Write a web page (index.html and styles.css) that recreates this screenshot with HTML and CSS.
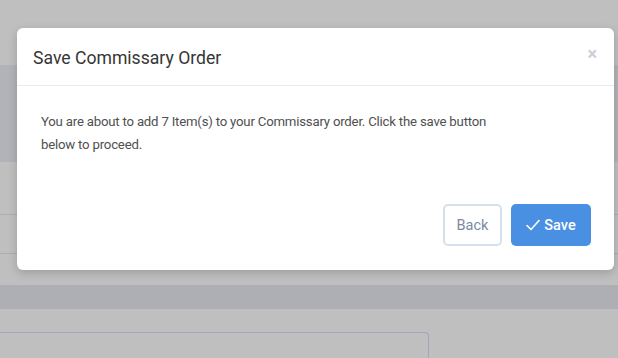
FILE: index.html
```html
<!DOCTYPE html>
<html>
<head>
<meta charset="utf-8">
<link rel="stylesheet" href="styles.css">
</head>
<body>
<div class="page">
  <div class="top"></div>
  <div class="band"></div>
  <div class="gap1"></div>
  <div class="row-line"></div>
  <div class="gap2"></div>
  <div class="band2"></div>
  <div class="gap3"></div>
  <div class="input-box"></div>
</div>
<div class="modal">
  <div class="modal-header">
    <h4 class="modal-title">Save Commissary Order</h4>
    <span class="close">&times;</span>
  </div>
  <div class="modal-body">
    <p>You are about to add 7 Item(s) to your Commissary order. Click the save button below to proceed.</p>
  </div>
  <div class="modal-footer">
    <button class="btn btn-back">Back</button>
    <button class="btn btn-save"><svg class="check" width="14" height="12" viewBox="0 0 14 12"><path d="M1 6.5 L5 10.5 L13 1.5" fill="none" stroke="#fff" stroke-width="1.6" stroke-linecap="round" stroke-linejoin="round"/></svg>Save</button>
  </div>
</div>
</body>
</html>
```

FILE: styles.css
```css
html, body {
  margin: 0;
  padding: 0;
  width: 618px;
  height: 358px;
  overflow: hidden;
  background: #bfbfbf;
  font-family: Roboto, Lato, sans-serif;
}
.page {
  display: flex;
  flex-direction: column;
}
.top { height: 65px; }
.band { height: 97px; background: #b2b3b8; }
.gap1 { height: 52px; border-bottom: 1px solid #a9aeb7; }
.row-line { height: 38px; border-bottom: 1px solid #a9aeb7; }
.gap2 { height: 31px; }
.band2 { height: 24px; background: #adafb5; }
.gap3 { height: 23px; }
.input-box {
  width: 428px;
  height: 40px;
  border-top: 1px solid #a0a9b8;
  border-right: 1px solid #a0a9b8;
  border-top-right-radius: 4px;
}
.modal {
  position: absolute;
  left: 17px;
  top: 28px;
  width: 597px;
  height: 242px;
  background: #fff;
  border-radius: 6px;
  box-shadow: 0 3px 10px rgba(0,0,0,0.18);
  display: flex;
  flex-direction: column;
}
.modal-header {
  height: 58px;
  box-sizing: border-box;
  border-bottom: 1px solid #e4ebf1;
  display: flex;
  align-items: center;
  justify-content: space-between;
  padding: 0 17px 0 16px;
}
.modal-title {
  margin: 0;
  font-size: 17.6px;
  font-weight: 400;
  color: #363636;
  padding-top: 2px;
}
.close {
  font-size: 18px;
  font-weight: 700;
  color: #cbcfd6;
  line-height: 1;
  margin-top: -6px;
}
.modal-body {
  padding: 24px 24px 0 24px;
}
.modal-body p {
  margin: 0;
  max-width: 460px;
  font-size: 13.2px;
  letter-spacing: -0.2px;
  line-height: 23px;
  color: #505050;
}
.modal-footer {
  margin-top: auto;
  display: flex;
  justify-content: flex-end;
  gap: 9px;
  padding: 0 23px 24px 0;
}
.btn {
  height: 42px;
  border-radius: 5px;
  font-family: inherit;
  font-size: 14.5px;
  box-sizing: border-box;
  display: flex;
  align-items: center;
  justify-content: center;
  padding: 0;
}
.btn-back {
  width: 59px;
  background: #fff;
  border: 2px solid #d6e0ed;
  color: #7b89a3;
}
.btn-save {
  width: 80px;
  background: #4a90e2;
  border: none;
  color: #fff;
  font-weight: 500;
  gap: 4px;
}
.check { display: block; }
```
